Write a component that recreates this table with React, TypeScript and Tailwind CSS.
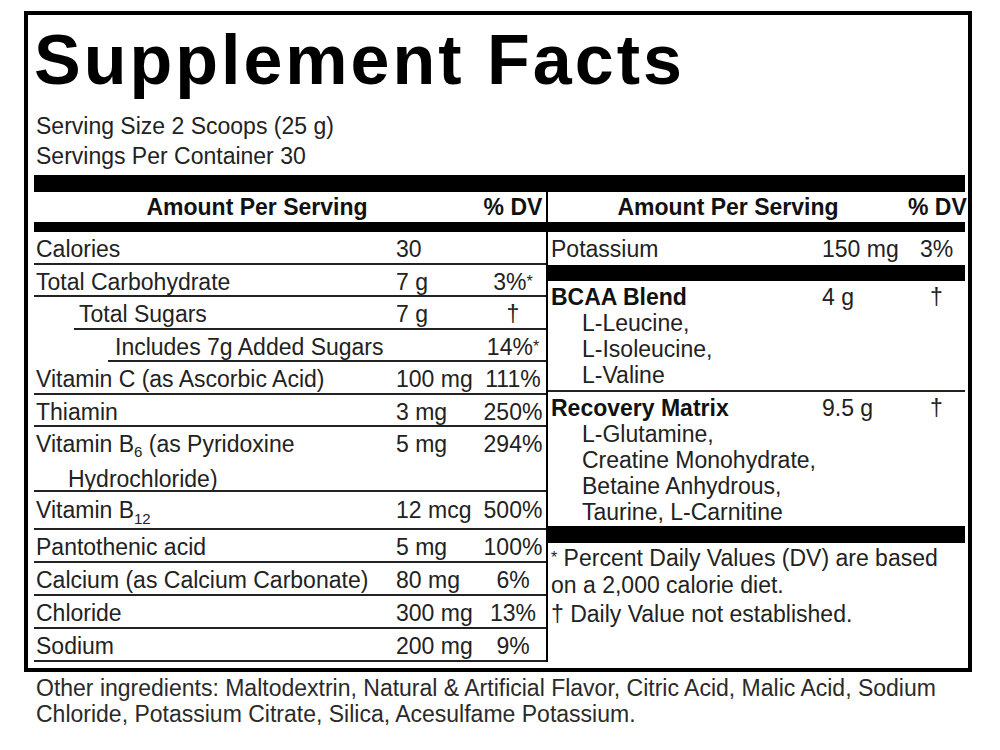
import type { ReactNode } from "react";

type LeftRow = {
  name: ReactNode;
  amount?: string;
  dv?: ReactNode;
  indent?: 0 | 1 | 2;
  size?: "top" | "one" | "two" | "sub";
};

const Star = () => (
  <span className="relative top-[-3px] text-[16px] leading-none">*</span>
);

const leftRows: LeftRow[] = [
  { name: "Calories", amount: "30", size: "top" },
  { name: "Total Carbohydrate", amount: "7 g", dv: <>3%<Star /></>, size: "top" },
  { name: "Total Sugars", amount: "7 g", dv: "†", indent: 1, size: "top" },
  { name: "Includes 7g Added Sugars", dv: <>14%<Star /></>, indent: 2, size: "top" },
  { name: "Vitamin C (as Ascorbic Acid)", amount: "100 mg", dv: "111%", size: "top" },
  { name: "Thiamin", amount: "3 mg", dv: "250%", size: "top" },
  {
    name: (
      <>
        <div>
          Vitamin B<span className="relative top-[5px] text-[15px]">6</span> (as Pyridoxine
        </div>
        <div className="pl-[32px]">Hydrochloride)</div>
      </>
    ),
    amount: "5 mg",
    dv: "294%",
    size: "two",
  },
  {
    name: (
      <>
        Vitamin B<span className="relative top-[6px] text-[15px]">12</span>
      </>
    ),
    amount: "12 mcg",
    dv: "500%",
    size: "sub",
  },
  { name: "Pantothenic acid", amount: "5 mg", dv: "100%" },
  { name: "Calcium (as Calcium Carbonate)", amount: "80 mg", dv: "6%" },
  { name: "Chloride", amount: "300 mg", dv: "13%" },
  { name: "Sodium", amount: "200 mg", dv: "9%" },
];

function Row({ row }: { row: LeftRow }) {
  const indent = row.indent ?? 0;
  const size = row.size ?? "one";
  const wrap =
    indent === 1
      ? "ml-[40px] grid-cols-[322px_84px_66px]"
      : indent === 2
        ? "ml-[74px] grid-cols-[288px_84px_66px]"
        : "grid-cols-[362px_84px_66px]";
  const height =
    size === "two"
      ? "h-[65px] pt-[1px] leading-[32px]"
      : size === "sub"
        ? "h-[38px] pt-[1px] leading-[35px]"
        : size === "top"
          ? "h-[32.5px] pt-[2px] leading-[30px]"
          : "h-[33px] pt-[2px] leading-[30px]";
  const pad = indent === 1 ? "pl-[5px]" : indent === 2 ? "pl-[7px]" : "pl-[2px]";
  return (
    <div className={`grid items-start border-b-2 border-[#222] ${wrap} ${height}`}>
      <div className={`whitespace-nowrap ${pad}`}>{row.name}</div>
      <div className="whitespace-nowrap">{row.amount}</div>
      <div className="text-center whitespace-nowrap">{row.dv}</div>
    </div>
  );
}

function Blend({ title, amount, items }: { title: string; amount: string; items: string[] }) {
  return (
    <div className="leading-[26px]">
      <div className="grid grid-cols-[274px_86px_57px]">
        <div className="pl-[3px] font-bold text-[#111]">{title}</div>
        <div>{amount}</div>
        <div className="text-center">†</div>
      </div>
      {items.map((item) => (
        <div key={item} className="pl-[34px]">
          {item}
        </div>
      ))}
    </div>
  );
}

export default function App() {
  return (
    <div className="min-h-[750px] bg-white pt-[11px] font-['Liberation_Sans',Arial,sans-serif] text-[23px] text-[#222]">
      <div className="ml-[24px] h-[661px] w-[948px] border-4 border-black pl-[6px] pr-[3px]">
        <h1 className="mt-[10px] text-[70px] leading-[70px] font-bold tracking-[3px] text-black">
          Supplement Facts
        </h1>

        <div className="mt-[16px] pl-[2px] leading-[30px]">
          <div>Serving Size 2 Scoops (25 g)</div>
          <div>Servings Per Container 30</div>
        </div>

        <div className="mt-[4px] h-[17px] bg-black" />

        <div className="grid grid-cols-[514px_417px] items-start">
          {/* left half */}
          <div className="border-r-2 border-black">
            <div className="grid h-[30px] grid-cols-[446px_66px] font-bold leading-[30px] text-[#111]">
              <div className="text-center">Amount Per Serving</div>
              <div className="text-center whitespace-nowrap">% DV</div>
            </div>
            <div className="h-[10px] bg-black" />
            {leftRows.map((row, i) => (
              <Row key={i} row={row} />
            ))}
          </div>

          {/* right half */}
          <div>
            <div className="grid h-[30px] grid-cols-[360px_57px] font-bold leading-[30px] text-[#111]">
              <div className="text-center">Amount Per Serving</div>
              <div className="text-center whitespace-nowrap">% DV</div>
            </div>
            <div className="h-[10px] bg-black" />
            <div className="grid h-[33px] grid-cols-[274px_86px_57px] pt-[1px] leading-[33px]">
              <div className="pl-[3px]">Potassium</div>
              <div>150 mg</div>
              <div className="text-center">3%</div>
            </div>
            <div className="h-[16px] bg-black" />
            <div className="border-b-2 border-[#222] pt-[3px] pb-[2px]">
              <Blend title="BCAA Blend" amount="4 g" items={["L-Leucine,", "L-Isoleucine,", "L-Valine"]} />
            </div>
            <div className="pt-[3px] pb-[1px]">
              <Blend
                title="Recovery Matrix"
                amount="9.5 g"
                items={[
                  "L-Glutamine,",
                  "Creatine Monohydrate,",
                  "Betaine Anhydrous,",
                  "Taurine, L-Carnitine",
                ]}
              />
            </div>
            <div className="h-[17px] bg-black" />
            <div className="pl-[3px] pt-[2px] leading-[27px]">
              <div>
                <Star /> Percent Daily Values (DV) are based
              </div>
              <div>on a 2,000 calorie diet.</div>
              <div className="mt-[2px]">† Daily Value not established.</div>
            </div>
          </div>
        </div>
      </div>

      <div className="mt-[3px] pl-[36px] pr-[20px] text-[23px] leading-[26px] text-[#2a2a2a]">
        Other ingredients: Maltodextrin, Natural &amp; Artificial Flavor, Citric Acid, Malic Acid, Sodium
        <br />
        Chloride, Potassium Citrate, Silica, Acesulfame Potassium.
      </div>
    </div>
  );
}
